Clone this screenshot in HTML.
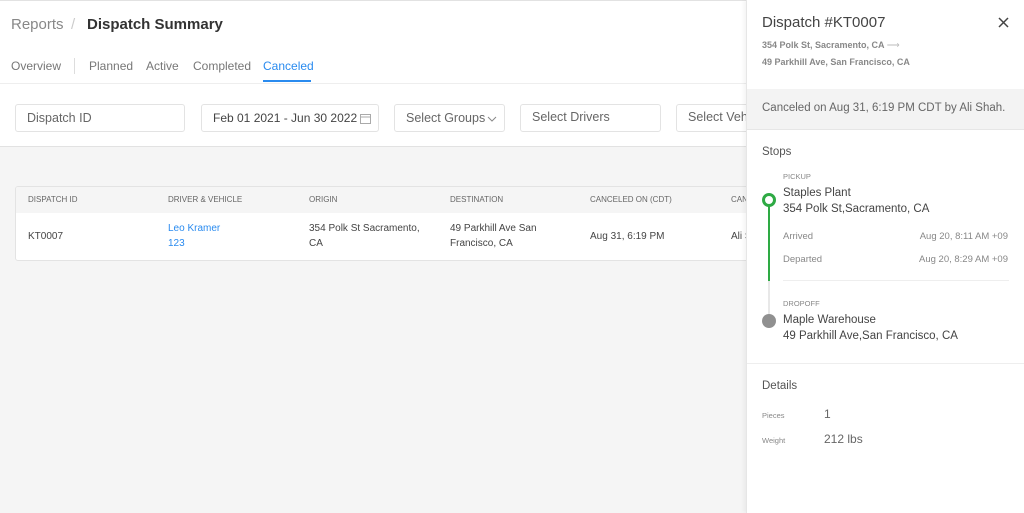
<!DOCTYPE html>
<html><head><meta charset="utf-8"><style>
*{box-sizing:border-box;margin:0;padding:0}
body{width:1024px;height:513px;overflow:hidden;position:relative;background:#f5f5f5;font-family:"Liberation Sans",sans-serif;color:#444}
.a{position:absolute;white-space:nowrap}
.inp{position:absolute;top:104px;height:28px;border:1px solid #e3e3e3;border-radius:3px;background:#fff;font-size:12.5px;color:#666;padding:0 11px;line-height:26px;white-space:nowrap;overflow:hidden}
.th{position:absolute;top:195px;font-size:8px;color:#666}
.td{position:absolute;font-size:10px;color:#444;line-height:15px;white-space:nowrap}
</style></head><body>
<div class="a" style="left:0;top:0;width:1024px;height:147px;background:#fff;border-top:1px solid #e2e2e2;border-bottom:1px solid #e2e2e2"></div>
<div class="a" style="left:11px;top:16px;font-size:15px;color:#888">Reports</div>
<div class="a" style="left:71px;top:16px;font-size:15px;color:#ccc">/</div>
<div class="a" style="left:87px;top:16px;font-size:15px;color:#333;font-weight:bold">Dispatch Summary</div>
<div class="a" style="left:11px;top:59px;font-size:12px;color:#777">Overview</div>
<div class="a" style="left:74px;top:58px;width:1px;height:16px;background:#ddd"></div>
<div class="a" style="left:89px;top:59px;font-size:12px;color:#777">Planned</div>
<div class="a" style="left:146px;top:59px;font-size:12px;color:#777">Active</div>
<div class="a" style="left:193px;top:59px;font-size:12px;color:#777">Completed</div>
<div class="a" style="left:263px;top:59px;font-size:12px;color:#2a8bef">Canceled</div>
<div class="a" style="left:263px;top:80px;width:48px;height:2px;background:#2a8bef"></div>
<div class="a" style="left:0;top:83px;width:746px;height:1px;background:#eee"></div>
<div class="inp" style="left:15px;width:170px">Dispatch ID</div>
<div class="inp" style="left:201px;width:178px;color:#444;padding-right:4px;font-size:12px">Feb 01 2021 - Jun 30 2022<svg style="position:absolute;right:7px;top:8px" width="11" height="11" viewBox="0 0 11 11"><rect x="0.5" y="1.5" width="10" height="9" fill="none" stroke="#aaa"/><line x1="0.5" y1="4" x2="10.5" y2="4" stroke="#aaa"/></svg></div>
<div class="inp" style="left:394px;width:111px">Select Groups<svg style="position:absolute;left:92px;top:11px" width="10" height="6" viewBox="0 0 10 6"><path d="M1 1l4 4 4-4" fill="none" stroke="#888"/></svg></div>
<div class="inp" style="left:520px;width:141px;line-height:24px">Select Drivers</div>
<div class="inp" style="left:676px;width:100px;line-height:24px">Select Vehicles</div>
<div class="a" style="left:15px;top:186px;width:740px;height:75px;background:#fff;border:1px solid #e3e3e3;border-radius:3px;overflow:hidden">
<div style="height:26px;background:#f5f5f5"></div></div>
<div class="th" style="left:28px">DISPATCH ID</div>
<div class="th" style="left:168px">DRIVER &amp; VEHICLE</div>
<div class="th" style="left:309px">ORIGIN</div>
<div class="th" style="left:450px">DESTINATION</div>
<div class="th" style="left:590px">CANCELED ON (CDT)</div>
<div class="th" style="left:731px">CAN</div>
<div class="td" style="left:28px;top:229px">KT0007</div>
<div class="td" style="left:168px;top:221px;color:#2a8bef">Leo Kramer<br>123</div>
<div class="td" style="left:309px;top:221px">354 Polk St Sacramento,<br>CA</div>
<div class="td" style="left:450px;top:221px">49 Parkhill Ave San<br>Francisco, CA</div>
<div class="td" style="left:590px;top:229px">Aug 31, 6:19 PM</div>
<div class="td" style="left:731px;top:229px">Ali S</div>
<div class="a" style="left:746px;top:0;width:278px;height:513px;background:#fff;border-left:1px solid #e6e6e6;box-shadow:-2px 0 4px rgba(0,0,0,.05);overflow:hidden">
<div class="a" style="left:15px;top:14px;font-size:15px;color:#444">Dispatch #KT0007</div>
<svg class="a" style="left:251px;top:17px" width="11" height="11" viewBox="0 0 11 11"><path d="M1 1l9 9M10 1l-9 9" stroke="#444" stroke-width="1.5"/></svg>
<div class="a" style="left:15px;top:40px;font-size:9px;color:#888;font-weight:bold">354 Polk St, Sacramento, CA <span style="color:#bbb;font-weight:normal">⟶</span></div>
<div class="a" style="left:15px;top:57px;font-size:9px;color:#888;font-weight:bold">49 Parkhill Ave, San Francisco, CA</div>
<div class="a" style="left:0;top:89px;width:278px;height:41px;background:#f3f3f3;border-bottom:1px solid #e6e6e6"></div>
<div class="a" style="left:15px;top:102px;font-size:11.5px;color:#666">Canceled on Aug 31, 6:19 PM CDT by Ali Shah.</div>
<div class="a" style="left:15px;top:146px;font-size:11.5px;color:#555">Stops</div>
<div class="a" style="left:36px;top:172px;font-size:7.5px;color:#888">PICKUP</div>
<div class="a" style="left:36px;top:187px;font-size:11.5px;color:#444">Staples Plant</div>
<div class="a" style="left:36px;top:203px;font-size:11.5px;color:#444">354 Polk St,Sacramento, CA</div>
<div class="a" style="left:36px;top:231px;font-size:9.5px;color:#888">Arrived</div>
<div class="a" style="left:36px;top:254px;font-size:9.5px;color:#888">Departed</div>
<div class="a" style="right:16px;top:231px;font-size:9.5px;color:#888">Aug 20, 8:11 AM +09</div>
<div class="a" style="right:16px;top:254px;font-size:9.5px;color:#888">Aug 20, 8:29 AM +09</div>
<div class="a" style="left:36px;top:280px;width:226px;height:1px;background:#eee"></div>
<div class="a" style="left:21px;top:200px;width:2px;height:81px;background:#2eaa44"></div>
<div class="a" style="left:21px;top:281px;width:2px;height:34px;background:#e8e8e8"></div>
<div class="a" style="left:15px;top:193px;width:14px;height:14px;border-radius:50%;border:3px solid #2eaa44;background:#fff"></div>
<div class="a" style="left:15px;top:314px;width:14px;height:14px;border-radius:50%;background:#909090"></div>
<div class="a" style="left:36px;top:299px;font-size:7.5px;color:#888">DROPOFF</div>
<div class="a" style="left:36px;top:314px;font-size:11.5px;color:#444">Maple Warehouse</div>
<div class="a" style="left:36px;top:330px;font-size:11.5px;color:#444">49 Parkhill Ave,San Francisco, CA</div>
<div class="a" style="left:0;top:363px;width:278px;height:1px;background:#eee"></div>
<div class="a" style="left:15px;top:380px;font-size:11.5px;color:#555">Details</div>
<div class="a" style="left:15px;top:411px;font-size:7.5px;color:#888">Pieces</div>
<div class="a" style="left:77px;top:407px;font-size:12px;color:#666">1</div>
<div class="a" style="left:15px;top:436px;font-size:7.5px;color:#888">Weight</div>
<div class="a" style="left:77px;top:432px;font-size:12px;color:#666">212 lbs</div>
</div>
</body></html>
